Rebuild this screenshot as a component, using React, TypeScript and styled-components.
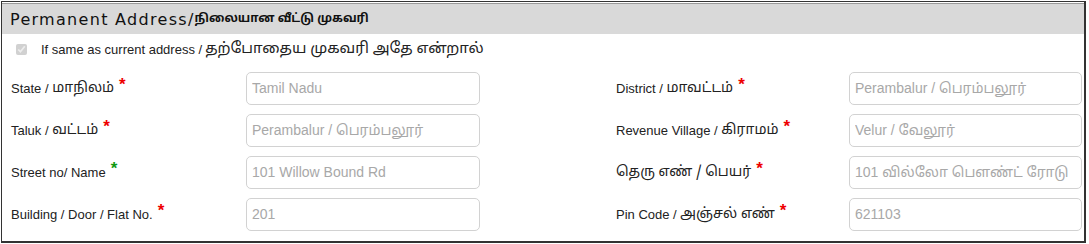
import React from 'react'
import styled, { createGlobalStyle } from 'styled-components'

const tamil = `"Noto Sans Tamil", "Lohit Tamil", "Latha", "Liberation Sans", sans-serif`

const GlobalStyle = createGlobalStyle`
  html, body {
    margin: 0;
    padding: 0;
    background: #fff;
  }
  body {
    font-family: "Liberation Sans", Arial, sans-serif;
    color: #222;
  }
`

type Field = {
  label: string
  tamil?: string
  value: string
  star?: 'red' | 'green'
}

const leftFields: Field[] = [
  { label: 'State / ', tamil: 'மாநிலம்', value: 'Tamil Nadu', star: 'red' },
  { label: 'Taluk / ', tamil: 'வட்டம்', value: 'Perambalur / பெரம்பலூர்', star: 'red' },
  { label: 'Street no/ Name', value: '101 Willow Bound Rd', star: 'green' },
  { label: 'Building / Door / Flat No.', value: '201', star: 'red' },
]

const rightFields: Field[] = [
  { label: 'District / ', tamil: 'மாவட்டம்', value: 'Perambalur / பெரம்பலூர்', star: 'red' },
  { label: 'Revenue Village / ', tamil: 'கிராமம்', value: 'Velur / வேலூர்', star: 'red' },
  { label: '', tamil: 'தெரு எண் / பெயர்', value: '101 வில்லோ பௌண்ட் ரோடு', star: 'red' },
  { label: 'Pin Code / ', tamil: 'அஞ்சல் எண்', value: '621103', star: 'red' },
]

const App: React.FC = () => {
  const renderField = (f: Field) => (
    <React.Fragment key={f.label + f.value}>
      <SLabel>
        {f.label}
        {f.tamil && <STamil>{f.tamil}</STamil>}
        {f.star && <SStar $tone={f.star}>*</SStar>}
      </SLabel>
      <SInput type="text" placeholder={f.value} readOnly />
    </React.Fragment>
  )

  return (
    <>
      <GlobalStyle />
      <SPanel>
        <SHeader>
          Permanent Address/<SHeaderTamil>நிலையான வீட்டு முகவரி</SHeaderTamil>
        </SHeader>
        <SCheckRow>
          <SCheck type="checkbox" checked disabled readOnly />
          <span>If same as current address / </span>
          <STamilLg>தற்போதைய முகவரி அதே என்றால்</STamilLg>
        </SCheckRow>
        <SGrid>
          {leftFields.map((f, i) => (
            <React.Fragment key={i}>
              {renderField(f)}
              <span />
              {renderField(rightFields[i])}
            </React.Fragment>
          ))}
        </SGrid>
      </SPanel>
    </>
  )
}

const SPanel = styled.div`
  box-sizing: border-box;
  width: 1085px;
  height: 242px;
  margin: 1px 0 0 1px;
  border: 2px solid #333;
  border-left-width: 1px;
  border-top-width: 1px;
  background: #fff;
  overflow: hidden;
`

const SHeader = styled.div`
  height: 30px;
  margin-top: 1px;
  border-top: 1px solid #9a9a9a;
  background: #d9d9d9;
  padding-left: 8px;
  display: flex;
  align-items: center;
  font-family: "DejaVu Sans", Verdana, sans-serif;
  font-size: 16px;
  color: #111;
  letter-spacing: 1.3px;
`

const SHeaderTamil = styled.span`
  font-family: ${tamil};
  font-weight: bold;
  font-size: 12px;
  letter-spacing: 0;
`

const SCheckRow = styled.div`
  display: flex;
  align-items: center;
  height: 30px;
  padding-left: 14px;
  font-size: 13px;
  color: #222;
`

const SCheck = styled.input`
  width: 11px;
  height: 11px;
  margin: 0 14px 0 0;
  accent-color: #bbb;
`

const STamilLg = styled.span`
  font-family: ${tamil};
  font-size: 15px;
  margin-left: 3px;
`

const SGrid = styled.div`
  display: grid;
  grid-template-columns: 235px 234px 136px 233px 233px;
  grid-auto-rows: 34px;
  row-gap: 8px;
  padding: 7px 0 0 9px;
  align-items: center;
`

const SLabel = styled.label`
  font-size: 13px;
  color: #222;
  display: flex;
  align-items: center;
  white-space: pre;
`

const STamil = styled.span`
  font-family: ${tamil};
  font-size: 14px;
`

const SStar = styled.span<{ $tone: 'red' | 'green' }>`
  color: ${p => (p.$tone === 'red' ? '#ee0000' : '#119911')};
  font-weight: bold;
  font-size: 17px;
  margin-left: 5px;
  position: relative;
  top: -3px;
`

const SInput = styled.input`
  box-sizing: border-box;
  width: 100%;
  height: 33px;
  border: 1px solid #d2d2d2;
  border-radius: 5px;
  padding: 0 5px;
  font-family: "Liberation Sans", Arial, ${tamil};
  font-size: 14px;
  background: #fff;
  outline: none;
  &::placeholder {
    color: #a8a8a8;
  }
`

export default App
